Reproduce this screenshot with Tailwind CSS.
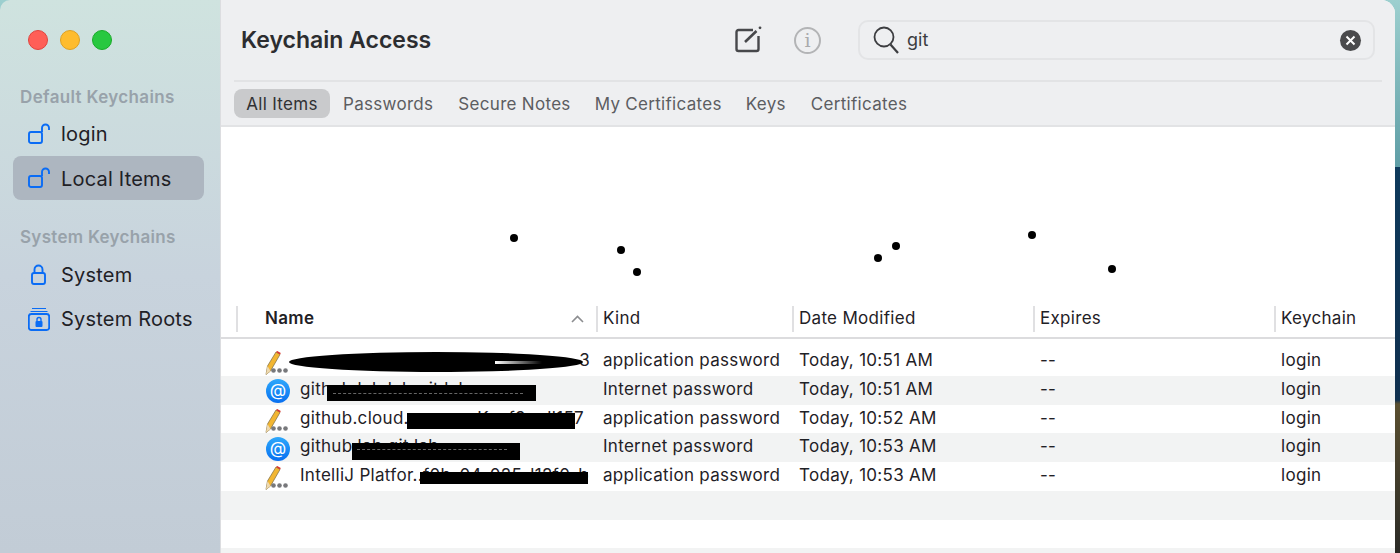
<!DOCTYPE html>
<html lang="en">
<head>
    <meta charset="UTF-8">
    <title>Keychain Access</title>
    <script src="https://cdn.jsdelivr.net/npm/@tailwindcss/browser@4"></script>
</head>
<body class="h-[553px] w-[1400px] overflow-hidden bg-[linear-gradient(to_bottom,#9ccfcf_0,#5f9ea6_167px,#0e3a5c_167px,#10304f_400px,#5a4f30_404px,#2b2a26_553px)] font-['Inter','Liberation_Sans',sans-serif] text-[#1f2126]">
    <div class="flex h-[553px] w-[1395px]">
        <!-- Sidebar -->
        <aside class="w-[221px] shrink-0 rounded-tl-[10px] border-r border-[#dcdde0] bg-gradient-to-b from-[#cfe3df] via-[#c8d3dd] to-[#c2ccd6] pt-[30px] pr-[16px] pl-[13px]">
            <div class="flex gap-3 pl-[15px]">
                <span class="size-5 rounded-full border border-[#e0443e] bg-[#ff5f57]"></span>
                <span class="size-5 rounded-full border border-[#dea123] bg-[#febc2e]"></span>
                <span class="size-5 rounded-full border border-[#1aab29] bg-[#28c840]"></span>
            </div>
            <p class="mt-[35px] pl-[7px] text-[17px] leading-6 font-semibold tracking-[0.35px] text-[#98a2aa]">Default Keychains</p>
            <div class="mt-[3px] flex h-11 items-center gap-[11px] pl-[15px] text-xl tracking-[0.2px]">
                <svg class="h-[22px] w-[22px]" viewBox="0 0 22 22" fill="none" stroke="#0a6cf5" stroke-width="1.9"><rect x="1" y="9" width="13" height="11" rx="2"/><path d="M14 9V5a3.5 3.5 0 0 1 7 0v2"/></svg>
                <span>login</span>
            </div>
            <div class="flex h-11 items-center gap-[11px] rounded-lg bg-[#adb6c0] pl-[15px] text-xl tracking-[0.2px]">
                <svg class="h-[22px] w-[22px]" viewBox="0 0 22 22" fill="none" stroke="#0a6cf5" stroke-width="1.9"><rect x="1" y="9" width="13" height="11" rx="2"/><path d="M14 9V5a3.5 3.5 0 0 1 7 0v2"/></svg>
                <span class="pt-[2px]">Local Items</span>
            </div>
            <p class="mt-[25px] pl-[7px] text-[17px] leading-6 font-semibold tracking-[0.3px] text-[#98a2aa]">System Keychains</p>
            <div class="mt-1 flex h-11 items-center gap-[11px] pl-[15px] text-xl tracking-[0.2px]">
                <svg class="h-[22px] w-[22px]" viewBox="0 0 22 22" fill="none" stroke="#0a6cf5" stroke-width="1.9"><rect x="4" y="9" width="13" height="11" rx="2"/><path d="M6.5 9V5.5a4 4 0 0 1 8 0V9"/></svg>
                <span>System</span>
            </div>
            <div class="flex h-11 items-center gap-[11px] pl-[15px] text-xl tracking-[0.2px]">
                <svg class="h-[24px] w-[22px]" viewBox="0 0 22 24" fill="none" stroke="#0a6cf5" stroke-width="1.9"><path d="M4 1.5h14M2.5 4.5h17" stroke-width="1.2"/><rect x="0.8" y="7" width="20.4" height="16" rx="2.5"/><rect x="7.5" y="14" width="7" height="6" rx="1" fill="#0a6cf5" stroke="none"/><path d="M9 14v-1.5a2 2 0 0 1 4 0V14" stroke-width="1.4"/></svg>
                <span>System Roots</span>
            </div>
        </aside>

        <!-- Main -->
        <main class="flex flex-1 flex-col overflow-hidden rounded-tr-[14px] bg-white">
            <header class="h-[127px] shrink-0 border-b-2 border-[#e2e3e5] bg-[#eeeff1] px-[13px]">
                <div class="flex h-[82px] items-center border-b-2 border-[#e2e3e5] pl-[7px]">
                    <h1 class="w-[494px] text-[23px] font-semibold text-[#2c2d30]">Keychain Access</h1>
                    <svg class="h-[28px] w-[28px]" viewBox="0 0 28 28" fill="none" stroke="#47484b" stroke-width="2.4"><path d="M18 4H3.5a2 2 0 0 0-2 2v17a2 2 0 0 0 2 2h18a2 2 0 0 0 2-2V10"/><path d="M10 16 21.5 5" stroke-width="2.6"/><circle cx="25" cy="1.8" r="1.4" fill="#47484b" stroke="none"/></svg>
                    <div class="ml-[31px] flex size-[27px] items-center justify-center rounded-full border-2 border-[#b3b4b6] font-['DejaVu_Serif',serif] text-[19px] leading-none text-[#a9aaac]">i</div>
                    <div class="ml-[37px] flex h-[40px] w-[517px] items-center rounded-[10px] border-2 border-[#e3e4e6] pr-[12px] pl-[13px]">
                        <svg class="h-[28px] w-[28px] shrink-0" viewBox="0 0 28 28" fill="none" stroke="#3c3d40" stroke-width="1.8"><circle cx="11" cy="11" r="9.5"/><path d="m17.5 18.5 7.5 8.5" stroke-width="2.2"/></svg>
                        <span class="ml-[6px] flex-1 text-lg text-[#3c3d40]">git</span>
                        <span class="flex size-[21px] items-center justify-center rounded-full bg-[#4a4a4c]"><svg class="size-[11px]" viewBox="0 0 11 11" stroke="#fff" stroke-width="2"><path d="m1.5 1.5 8 8M9.5 1.5l-8 8"/></svg></span>
                    </div>
                </div>
                <nav class="flex items-center gap-[13px] pt-[7px] text-[17px] tracking-[0.3px] text-[#5c5d61]">
                    <span class="flex h-[29px] w-[96px] items-center justify-center rounded-lg bg-[#c9cacc] pt-[2px] text-[#303134]">All Items</span>
                    <span class="pt-[2px]">Passwords</span>
                    <span class="ml-[12px] pt-[2px]">Secure Notes</span>
                    <span class="ml-[11px] pt-[2px]">My Certificates</span>
                    <span class="ml-[11px] pt-[2px]">Keys</span>
                    <span class="ml-[12px] pt-[2px]">Certificates</span>
                </nav>
            </header>

            <!-- Empty area with stray dots -->
            <div class="relative h-[173px] shrink-0">
                <span class="absolute top-[107px] left-[289px] size-2 rounded-full bg-black"></span>
                <span class="absolute top-[119px] left-[396px] size-2 rounded-full bg-black"></span>
                <span class="absolute top-[141px] left-[412px] size-2 rounded-full bg-black"></span>
                <span class="absolute top-[127px] left-[653px] size-2 rounded-full bg-black"></span>
                <span class="absolute top-[115px] left-[671px] size-2 rounded-full bg-black"></span>
                <span class="absolute top-[104px] left-[807px] size-2 rounded-full bg-black"></span>
                <span class="absolute top-[138px] left-[887px] size-2 rounded-full bg-black"></span>
            </div>

            <!-- Table header -->
            <div class="grid h-[39px] shrink-0 grid-cols-[375px_196px_241px_241px_1fr] border-b-2 border-[#dcdcde] text-[17px] tracking-[0.3px]">
                <div class="relative flex h-[26px] items-center justify-between self-center pr-[12px] pl-[44px] font-semibold">
                    <span class="absolute top-0 left-[15px] h-[26px] w-0.5 bg-[#e0e0e2]"></span>
                    <span>Name</span>
                    <svg class="h-2 w-[13px]" viewBox="0 0 13 8" fill="none" stroke="#8c8d90" stroke-width="1.6"><path d="m1 7 5.5-5.5L12 7"/></svg>
                </div>
                <div class="flex h-[26px] items-center self-center border-l-2 border-[#e0e0e2] pl-[5px]">Kind</div>
                <div class="flex h-[26px] items-center self-center border-l-2 border-[#e0e0e2] pl-[5px]">Date Modified</div>
                <div class="flex h-[26px] items-center self-center border-l-2 border-[#e0e0e2] pl-[5px]">Expires</div>
                <div class="flex h-[26px] items-center self-center border-l-2 border-[#e0e0e2] pl-[5px]">Keychain</div>
            </div>

            <!-- Rows -->
            <div class="mt-2 text-[17px] tracking-[0.3px]">
                <div class="grid h-[28.75px] grid-cols-[375px_196px_241px_241px_1fr] items-center pb-[2px]">
                    <div class="relative flex items-center pl-[44px]">
                        <svg class="mt-1 h-[24px] w-[25px]" viewBox="0 0 25 24"><path d="M1 23.5 2.5 15 11 1l4 2.5L5.5 20Z" fill="#f2b632" stroke="#7a6a40" stroke-width=".7"/><path d="m11 1 1.2-1 3.6 2-.8 1.5Z" fill="#d9342b"/><path d="m1 23.5 1.5-8.5 3 5Z" fill="#eed9b0"/><circle cx="8.5" cy="19.5" r="2.3" fill="#77787b"/><circle cx="14.5" cy="19.5" r="2.3" fill="#77787b"/><circle cx="20.5" cy="19.5" r="2.3" fill="#77787b"/></svg>
                        <span class="absolute top-px right-[6px]">3</span>
                        <span class="absolute top-[5px] left-[68px] h-5 w-[294px] rounded-[50%] bg-black"></span>
                        <span class="absolute top-[14px] left-[274px] h-[3px] w-[47px] bg-gradient-to-r from-white to-transparent"></span>
                    </div>
                    <div class="pl-[7px]">application password</div><div class="pl-[7px]">Today, 10:51 AM</div><div class="pl-[7px]">--</div><div class="pl-[7px]">login</div>
                </div>
                <div class="grid h-[28.75px] grid-cols-[375px_196px_241px_241px_1fr] items-center bg-[#f2f3f3] pb-[2px]">
                    <div class="relative flex items-center pl-[44px]">
                        <span class="mt-[3px] ml-px flex size-6 items-center justify-center rounded-full bg-gradient-to-b from-[#2fa8fb] to-[#0a6ff0] text-[17px] leading-none text-white">@</span>
                        <span class="ml-[10px] whitespace-nowrap">github.lab.lab.git.lab</span>
                        <span class="absolute top-[9px] left-[106px] h-[16px] w-[209px] bg-black"></span>
                        <span class="absolute top-[17px] left-[112px] w-[190px] border-t border-dashed border-white/40"></span>
                    </div>
                    <div class="pl-[7px]">Internet password</div><div class="pl-[7px]">Today, 10:51 AM</div><div class="pl-[7px]">--</div><div class="pl-[7px]">login</div>
                </div>
                <div class="grid h-[28.75px] grid-cols-[375px_196px_241px_241px_1fr] items-center pb-[2px]">
                    <div class="relative flex items-center pl-[44px]">
                        <svg class="mt-1 h-[24px] w-[25px]" viewBox="0 0 25 24"><path d="M1 23.5 2.5 15 11 1l4 2.5L5.5 20Z" fill="#f2b632" stroke="#7a6a40" stroke-width=".7"/><path d="m11 1 1.2-1 3.6 2-.8 1.5Z" fill="#d9342b"/><path d="m1 23.5 1.5-8.5 3 5Z" fill="#eed9b0"/><circle cx="8.5" cy="19.5" r="2.3" fill="#77787b"/><circle cx="14.5" cy="19.5" r="2.3" fill="#77787b"/><circle cx="20.5" cy="19.5" r="2.3" fill="#77787b"/></svg>
                        <span class="ml-2.5 whitespace-nowrap">github.cloud.c</span>
                        <span class="absolute top-px right-[12px] whitespace-nowrap">Ksuf3mdl157</span>
                        <span class="absolute top-[8px] left-[186px] h-[16px] w-[168px] bg-black"></span>
                    </div>
                    <div class="pl-[7px]">application password</div><div class="pl-[7px]">Today, 10:52 AM</div><div class="pl-[7px]">--</div><div class="pl-[7px]">login</div>
                </div>
                <div class="grid h-[28.75px] grid-cols-[375px_196px_241px_241px_1fr] items-center bg-[#f2f3f3] pb-[1px]">
                    <div class="relative flex items-center pl-[44px]">
                        <span class="mt-[3px] ml-px flex size-6 items-center justify-center rounded-full bg-gradient-to-b from-[#2fa8fb] to-[#0a6ff0] text-[17px] leading-none text-white">@</span>
                        <span class="ml-[10px] whitespace-nowrap">github.lab.git.lab</span>
                        <span class="absolute top-[9px] left-[131px] h-[17px] w-[168px] bg-black"></span>
                        <span class="absolute top-[15px] left-[136px] w-[150px] border-t border-dashed border-white/40"></span>
                    </div>
                    <div class="pl-[7px]">Internet password</div><div class="pl-[7px]">Today, 10:53 AM</div><div class="pl-[7px]">--</div><div class="pl-[7px]">login</div>
                </div>
                <div class="grid h-[28.75px] grid-cols-[375px_196px_241px_241px_1fr] items-center pb-[1px]">
                    <div class="relative flex items-center pl-[44px]">
                        <svg class="mt-1 h-[24px] w-[25px]" viewBox="0 0 25 24"><path d="M1 23.5 2.5 15 11 1l4 2.5L5.5 20Z" fill="#f2b632" stroke="#7a6a40" stroke-width=".7"/><path d="m11 1 1.2-1 3.6 2-.8 1.5Z" fill="#d9342b"/><path d="m1 23.5 1.5-8.5 3 5Z" fill="#eed9b0"/><circle cx="8.5" cy="19.5" r="2.3" fill="#77787b"/><circle cx="14.5" cy="19.5" r="2.3" fill="#77787b"/><circle cx="20.5" cy="19.5" r="2.3" fill="#77787b"/></svg>
                        <span class="ml-2.5 whitespace-nowrap">IntelliJ Platfor..f0b-04-025-l12f0-b</span>
                        <span class="absolute top-[10px] left-[199px] h-[12px] w-[168px] bg-black"></span>
                    </div>
                    <div class="pl-[7px]">application password</div><div class="pl-[7px]">Today, 10:53 AM</div><div class="pl-[7px]">--</div><div class="pl-[7px]">login</div>
                </div>
                <div class="h-[28.75px] bg-[#f2f3f3]"></div>
                <div class="h-[28.75px]"></div>
                <div class="h-[28.75px] bg-[#f2f3f3]"></div>
            </div>
        </main>
    </div>
</body>
</html>
